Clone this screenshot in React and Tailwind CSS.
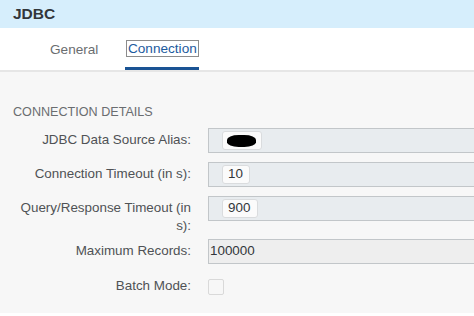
export default function App() {
  const font = { fontFamily: '"Liberation Sans", Arial, sans-serif' };
  const Row = ({ label, children, className = "" }) => (
    <div className={`flex items-start ${className}`}>
      <div className="w-[174px] ml-[17px] text-right text-[13.4px] leading-[18px] pt-[3px] text-[#4f5255]">
        {label}
      </div>
      <div className="ml-[17px] flex-1 -mr-4">{children}</div>
    </div>
  );
  const Field = ({ children, plain }) => (
    <div
      className={`h-[25px] flex items-center border border-[#c2c6c9] ${
        plain ? "bg-[#eeeeee]" : "bg-[#e8ecef]"
      }`}
    >
      {children}
    </div>
  );
  const Token = ({ children, w }) => (
    <div
      className={`ml-[13px] h-[19px] ${w} bg-[#fbfbfb] border border-[#dadcde] rounded-[3px] flex items-center px-[5px] text-[13.4px] text-[#32363a]`}
    >
      {children}
    </div>
  );
  return (
    <div className="w-[474px] h-[316px] overflow-hidden bg-[#f7f7f7] flex flex-col" style={font}>
      <div className="h-[28px] shrink-0 bg-[#d6eefc] flex items-center pl-[13px] text-[15.5px] font-bold text-[#32363a]">
        JDBC
      </div>
      <div className="h-[42px] shrink-0 bg-white flex items-start text-[13.6px]">
        <div className="ml-[50px] mt-[13px] h-[17px] leading-[17px] text-[#6a6d70]">General</div>
        <div className="ml-[27px] w-[74px] h-[42px] flex flex-col items-center">
          <div className="mt-[12px] h-[17px] leading-[15px] px-[1px] border border-[#8c8c8c] text-[#1d5b9e]">
            Connection
          </div>
          <div className="mt-auto h-[3px] w-full bg-[#1a5394]" />
        </div>
      </div>
      <div className="h-[2px] shrink-0 bg-[#e6e6e6]" />
      <div className="pt-[32px] pl-[13px] text-[12.6px] leading-[16px] text-[#6a6d70]">CONNECTION DETAILS</div>
      <Row label="JDBC Data Source Alias:" className="mt-[8px]">
        <Field>
          <Token w="w-[40px]">
            <div className="w-[30px] h-[12px] bg-black rounded-[40%] -ml-[1px]" />
          </Token>
        </Field>
      </Row>
      <Row label="Connection Timeout (in s):" className="mt-[9px]">
        <Field>
          <Token w="w-[28px]">10</Token>
        </Field>
      </Row>
      <Row label="Query/Response Timeout (in s):" className="mt-[9px]">
        <Field>
          <Token w="w-[36px]">900</Token>
        </Field>
      </Row>
      <Row label="Maximum Records:" className="mt-[4px]">
        <Field plain>
          <span className="text-[13.4px] text-[#32363a] pl-[1px]">100000</span>
        </Field>
      </Row>
      <Row label="Batch Mode:" className="mt-[10px]">
        <div className="h-[25px] flex items-center">
          <div className="w-[16px] h-[16px] border border-[#d9d9d9] bg-[#f7f7f7] rounded-[2px]" />
        </div>
      </Row>
      <div className="mt-auto h-[3px] bg-white" />
    </div>
  );
}
